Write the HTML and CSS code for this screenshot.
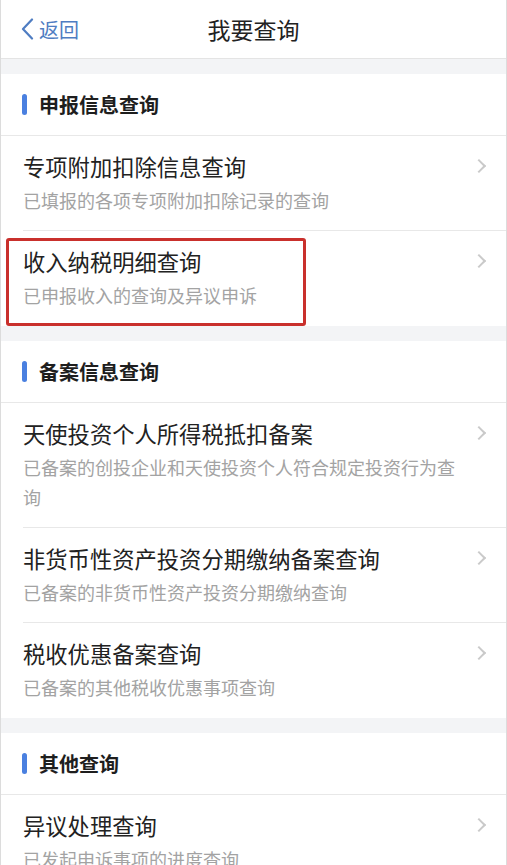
FILE: index.html
```html
<!DOCTYPE html>
<html lang="zh-CN">
<head>
    <meta charset="UTF-8">
    <meta name="viewport" content="width=device-width, initial-scale=1.0">
    <title>我要查询</title>
    <link rel="stylesheet" href="styles.css">
</head>
<body>

    <div class="page">
        <header class="nav">
            <a class="back" href="#">
                <svg width="13" height="22" viewBox="0 0 13 22"><polyline points="11,1.5 2,11 11,20.5" fill="none" stroke="#4f7dc2" stroke-width="2.2" stroke-linecap="round" stroke-linejoin="round"/></svg>
                <span>返回</span>
            </a>
            <h1>我要查询</h1>
            <span></span>
        </header>

        <div class="gap"></div>

        <section>
            <h2 class="section-head">申报信息查询</h2>
            <div class="list">
                <a class="item" href="#">
                    <div class="item-inner">
                        <div class="text">
                            <div class="title">专项附加扣除信息查询</div>
                            <div class="desc">已填报的各项专项附加扣除记录的查询</div>
                        </div>
                        <span class="arrow"></span>
                    </div>
                </a>
                <a class="item marked" href="#">
                    <div class="item-inner">
                        <div class="text">
                            <div class="title">收入纳税明细查询</div>
                            <div class="desc">已申报收入的查询及异议申诉</div>
                        </div>
                        <span class="arrow"></span>
                    </div>
                </a>
            </div>
        </section>

        <div class="gap"></div>

        <section>
            <h2 class="section-head">备案信息查询</h2>
            <div class="list">
                <a class="item" href="#">
                    <div class="item-inner">
                        <div class="text">
                            <div class="title">天使投资个人所得税抵扣备案</div>
                            <div class="desc">已备案的创投企业和天使投资个人符合规定投资行为查询</div>
                        </div>
                        <span class="arrow"></span>
                    </div>
                </a>
                <a class="item" href="#">
                    <div class="item-inner">
                        <div class="text">
                            <div class="title">非货币性资产投资分期缴纳备案查询</div>
                            <div class="desc">已备案的非货币性资产投资分期缴纳查询</div>
                        </div>
                        <span class="arrow"></span>
                    </div>
                </a>
                <a class="item" href="#">
                    <div class="item-inner">
                        <div class="text">
                            <div class="title">税收优惠备案查询</div>
                            <div class="desc">已备案的其他税收优惠事项查询</div>
                        </div>
                        <span class="arrow"></span>
                    </div>
                </a>
            </div>
        </section>

        <div class="gap"></div>

        <section>
            <h2 class="section-head">其他查询</h2>
            <div class="list">
                <a class="item" href="#">
                    <div class="item-inner">
                        <div class="text">
                            <div class="title">异议处理查询</div>
                            <div class="desc">已发起申诉事项的进度查询</div>
                        </div>
                        <span class="arrow"></span>
                    </div>
                </a>
            </div>
        </section>
    </div>

</body>
</html>
```

FILE: styles.css
```css
/* General Styles */
html, body {
    margin: 0;
    padding: 0;
    background: #fff;
    color: #222;
    font-family: "Noto Sans CJK SC", "Noto Sans", sans-serif;
}

.page {
    min-height: 865px;
    border-left: 1px solid #dcdcdc;
    border-right: 1px solid #dcdcdc;
    background: #fff;
}

/* Nav bar */
.nav {
    height: 58px;
    display: grid;
    grid-template-columns: 1fr auto 1fr;
    align-items: center;
    border-bottom: 1px solid #e4e4e4;
}

.back {
    display: flex;
    align-items: center;
    gap: 5px;
    padding-left: 20px;
    color: #4f7dc2;
    font-size: 20px;
    text-decoration: none;
}

.back svg {
    display: block;
}

.nav h1 {
    margin: 0;
    font-size: 23px;
    font-weight: normal;
    color: #222;
}

.gap {
    height: 15px;
    background: #f3f4f6;
}

/* Section header */
.section-head {
    margin: 0;
    height: 61px;
    display: flex;
    align-items: center;
    padding-left: 21px;
    font-size: 20px;
    font-weight: bold;
    color: #1e1e1e;
    border-bottom: 1px solid #e8e8e8;
}

.section-head::before {
    content: "";
    width: 5px;
    height: 21px;
    border-radius: 3px;
    background: #4a80e0;
    margin-right: 12px;
}

/* List items */
.item {
    display: block;
    position: relative;
    padding-left: 22px;
    color: inherit;
    text-decoration: none;
}

.item-inner {
    display: flex;
    align-items: flex-start;
    gap: 8px;
    padding: 15px 21px 15px 0;
    border-bottom: 1px solid #e8e8e8;
}

.item:last-child .item-inner {
    border-bottom-color: transparent;
}

.text {
    flex: 1;
    min-width: 0;
}

.title {
    font-size: 22.3px;
    line-height: 31px;
    color: #222;
}

.desc {
    margin-top: 3px;
    font-size: 18px;
    line-height: 30px;
    color: #a3a3a3;
}

.arrow {
    width: 10px;
    height: 14px;
    flex-shrink: 0;
    position: relative;
    margin-top: 8px;
}

.arrow::after {
    content: "";
    position: absolute;
    left: -1px;
    top: 2px;
    width: 8px;
    height: 8px;
    border-top: 2px solid #cacaca;
    border-right: 2px solid #cacaca;
    transform: rotate(45deg);
}

/* Highlight box */
.marked::after {
    content: "";
    position: absolute;
    left: 5px;
    top: 7px;
    width: 300px;
    height: 88px;
    box-sizing: border-box;
    border: 3px solid #c9302c;
    border-radius: 3px;
    pointer-events: none;
}
```
